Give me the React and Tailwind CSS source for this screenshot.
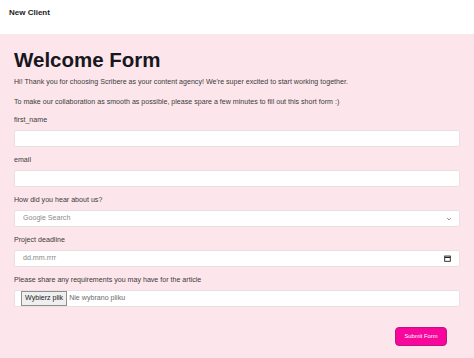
import React from 'react';

const Field = ({ label, children }) => (
  <div className="mt-[7.5px]">
    <div className="text-[7.1px] leading-[10px] text-[#3b3b3b]">{label}</div>
    <div className="mt-[5.5px]">{children}</div>
  </div>
);

const Box = ({ children }) => (
  <div className="flex h-[17px] items-center justify-between rounded-[2px] border border-[#eadfe2] bg-white px-[7px] text-[7.1px] text-[#8a8a8a]">
    {children}
  </div>
);

const App = () => {
  return (
    <div className="flex min-h-[358px] flex-col bg-white font-['Liberation_Sans',Arial,sans-serif]">
      {/* Header */}
      <div className="h-[34px] px-[9px] pt-[8px] shadow-[0_1px_2px_rgba(0,0,0,0.04)]">
        <div className="text-[8px] font-bold leading-[10px] text-[#1a1a1a]">New Client</div>
      </div>

      {/* Form panel */}
      <div className="flex-1 bg-[#fde6eb] px-[14px] pt-[14px]">
        <h1 className="text-[20.5px] font-bold leading-[24px] text-[#17171f]">Welcome Form</h1>
        <p className="mt-[5px] text-[7.1px] leading-[10px] text-[#3b3b3b]">
          Hi! Thank you for choosing Scribere as your content agency! We're super excited to start working together.
        </p>
        <p className="mt-[10px] text-[7.1px] leading-[10px] text-[#3b3b3b]">
          To make our collaboration as smooth as possible, please spare a few minutes to fill out this short form :)
        </p>

        <div className="mt-[3px]">
          <Field label="first_name">
            <Box />
          </Field>
          <Field label="email">
            <Box />
          </Field>
          <Field label="How did you hear about us?">
            <Box>
              <span className="ml-px">Google Search</span>
              <svg className="h-[6px] w-[6px] text-[#777]" viewBox="0 0 10 10" fill="none" stroke="currentColor">
                <path strokeWidth="1.5" d="M2 3.5l3 3 3-3" />
              </svg>
            </Box>
          </Field>
          <Field label="Project deadline">
            <Box>
              <span className="ml-px">dd.mm.rrrr</span>
              <svg className="mr-[1px] h-[7px] w-[7px]" viewBox="0 0 10 10" fill="none" stroke="#222">
                <rect x="1" y="1.5" width="8" height="7.5" strokeWidth="1.3" />
                <path d="M1 3.5h8" strokeWidth="1.5" />
              </svg>
            </Box>
          </Field>
          <Field label="Please share any requirements you may have for the article">
            <div className="flex h-[17px] items-center rounded-[2px] border border-[#eadfe2] bg-white pl-[6px] text-[7.1px]">
              <span className="flex h-[15px] items-center border border-[#8f8f8f] bg-[#efefef] px-[3px] text-[#222]">
                Wybierz plik
              </span>
              <span className="ml-[2px] text-[#6a6a6a]">Nie wybrano pliku</span>
            </div>
          </Field>
        </div>

        <div className="mt-[20px] flex justify-end pr-[13px]">
          <button className="flex h-[19px] w-[52px] items-center justify-center rounded-[4px] border border-[#c4127f] bg-[#f7079b] text-[5.8px] text-white">
            Submit Form
          </button>
        </div>
      </div>
    </div>
  );
};

export default App;
